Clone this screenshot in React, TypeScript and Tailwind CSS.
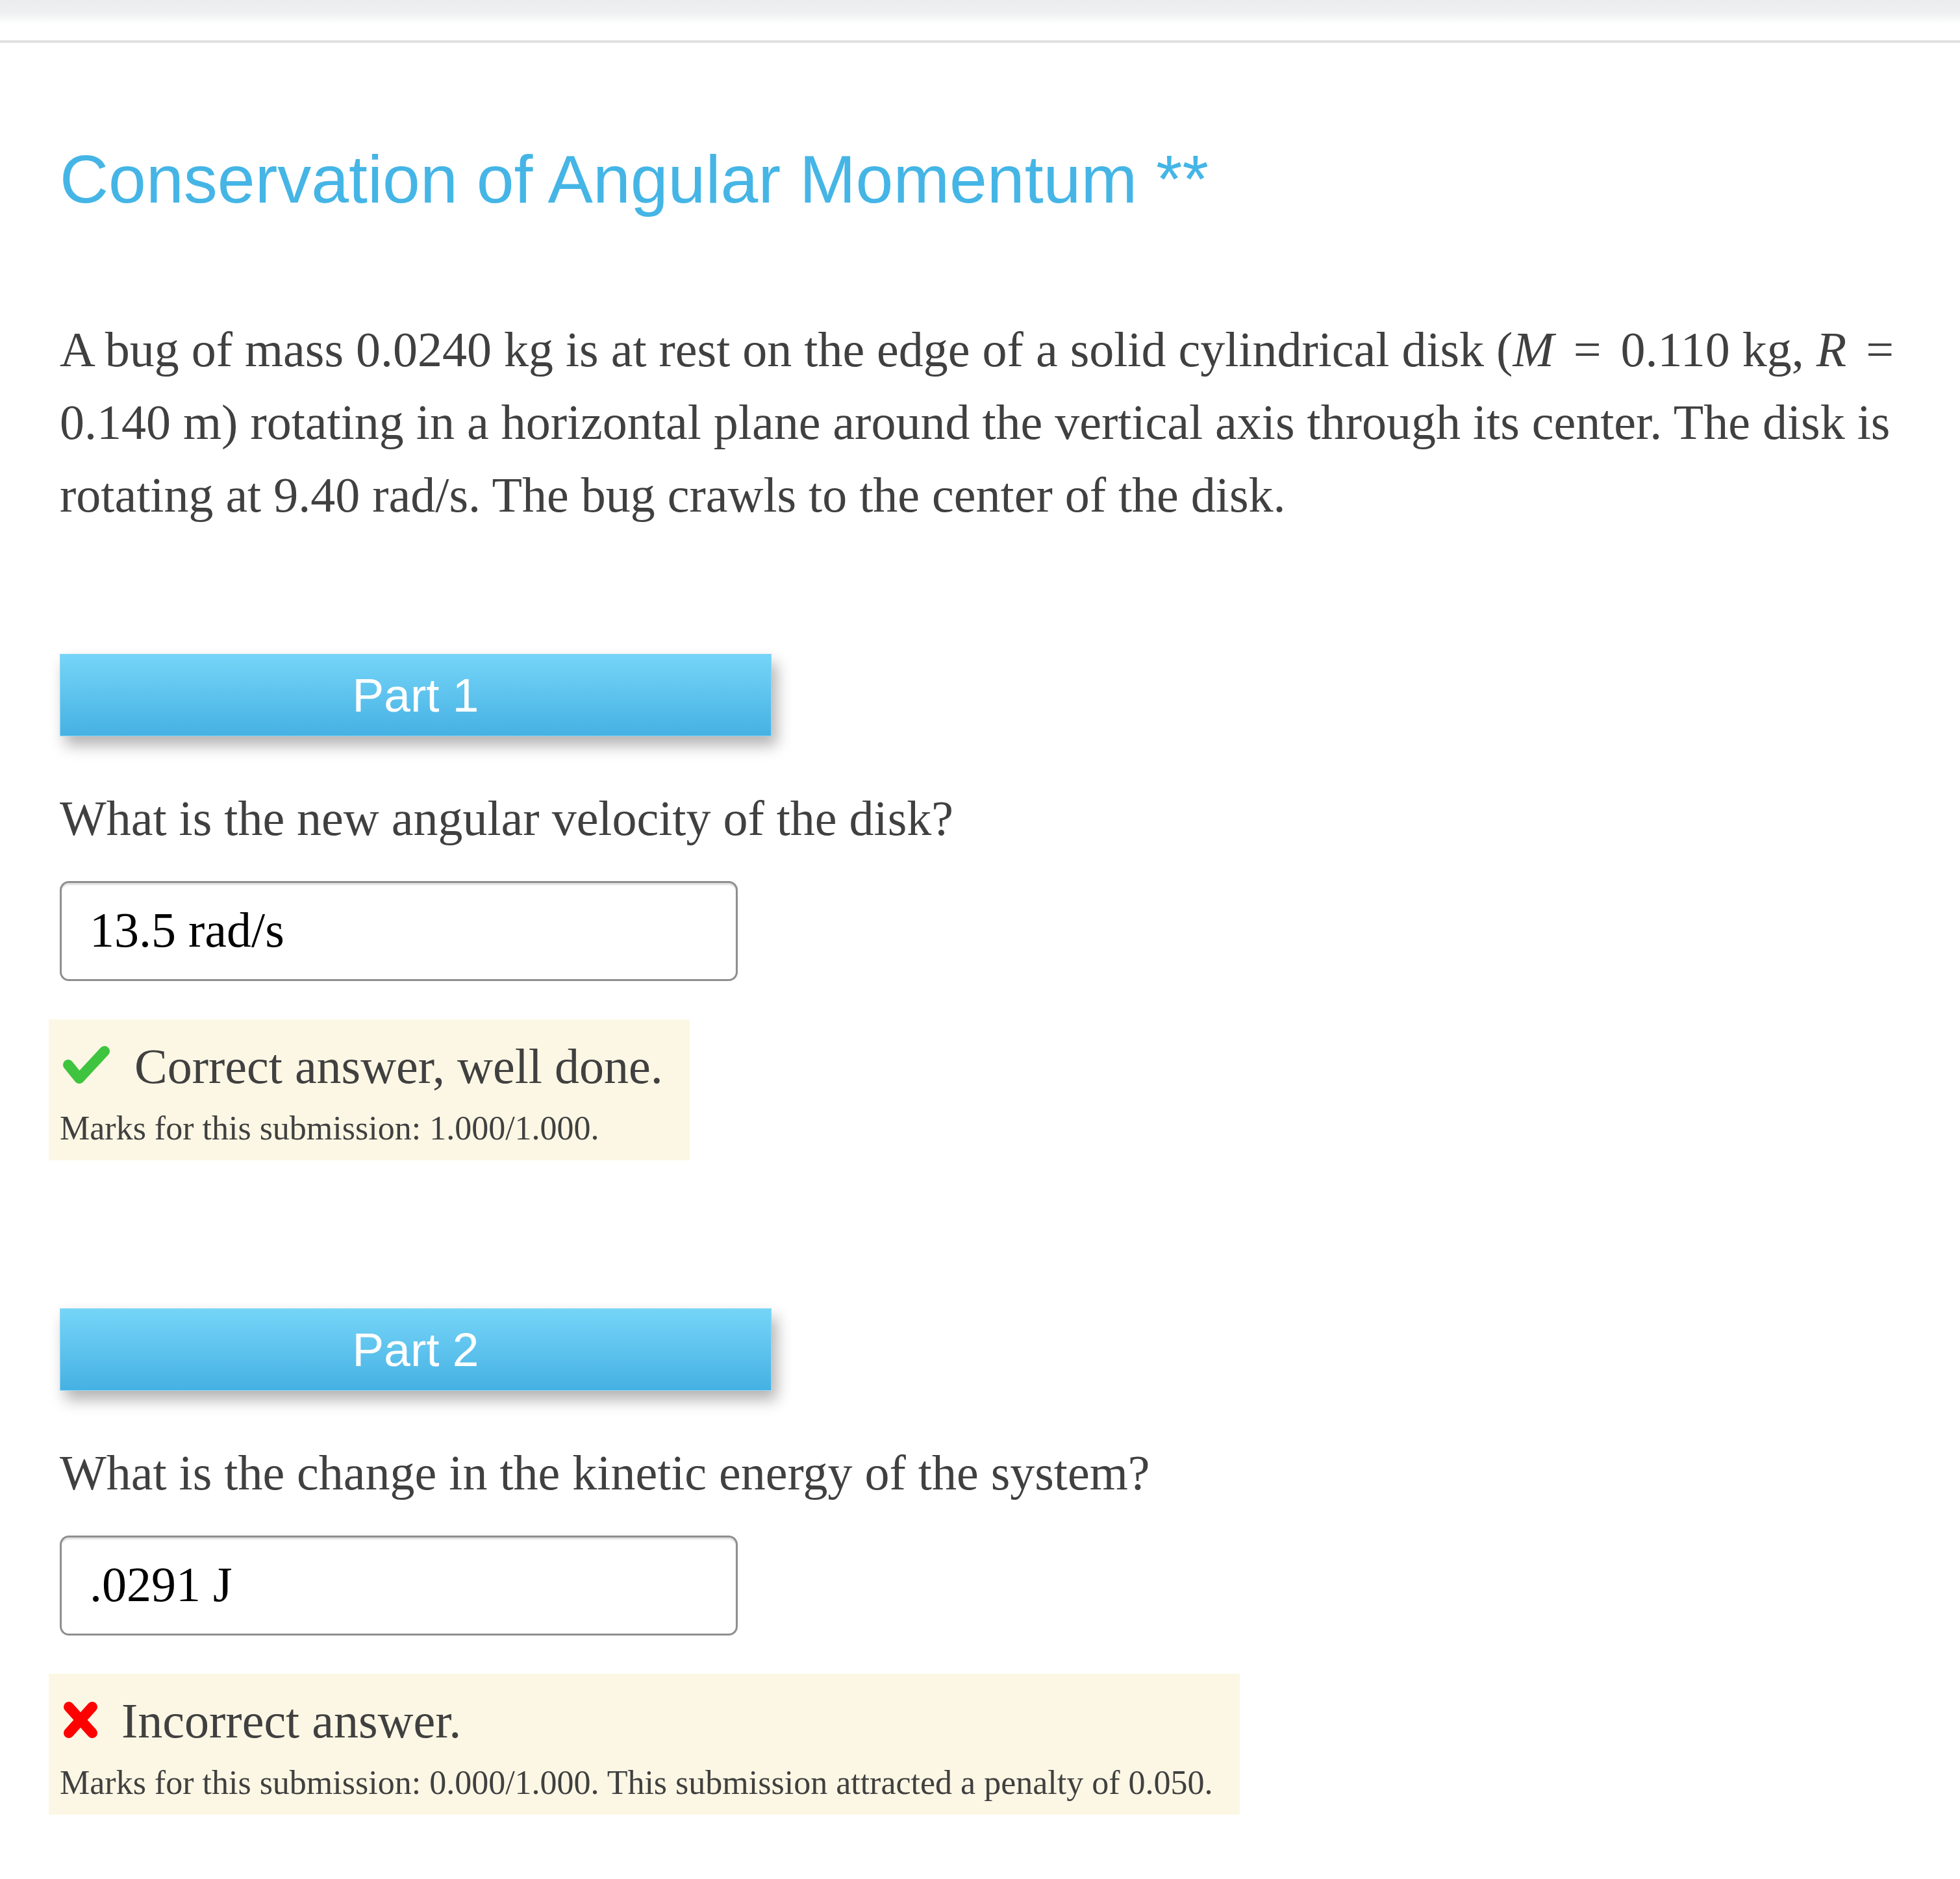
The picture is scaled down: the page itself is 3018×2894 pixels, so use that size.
import React from "react";

const serif = "font-['Liberation_Serif','Times_New_Roman',serif]";
const sans = "font-['Liberation_Sans',Arial,sans-serif]";

function CheckIcon() {
  return (
    <svg width="73" height="60" viewBox="0 0 73 60" className="shrink-0">
      <polyline
        points="9,30 26,51 65,9"
        fill="none"
        stroke="#3ec43f"
        strokeWidth="16"
        strokeLinecap="round"
        strokeLinejoin="round"
      />
    </svg>
  );
}

function CrossIcon() {
  return (
    <svg width="56" height="60" viewBox="0 0 56 60" className="shrink-0">
      <g stroke="#ff0000" strokeWidth="16" strokeLinecap="round">
        <line x1="10" y1="10" x2="46" y2="50" />
        <line x1="46" y1="10" x2="10" y2="50" />
      </g>
    </svg>
  );
}

function PartHeader({ label }: { label: string }) {
  return (
    <div className="w-[1096px] h-[127px] border border-[#8fd8f6] bg-gradient-to-b from-[#75d5f8] to-[#45b1e3] shadow-[8px_14px_22px_rgba(0,0,0,0.3)] flex items-center justify-center">
      <span className={`${sans} text-[73px] leading-[127px] text-white`}>{label}</span>
    </div>
  );
}

function AnswerBox({ value }: { value: string }) {
  return (
    <div className="w-[1044px] h-[154px] border-[3px] border-[#8f8f8f] rounded-[14px] bg-white shadow-[inset_0_3px_2px_rgba(0,0,0,0.12)] pl-[43px] pt-[16px]">
      <span className={`${serif} text-[76px] leading-[112px] text-black`}>{value}</span>
    </div>
  );
}

function Feedback({
  ok,
  title,
  marks,
}: {
  ok: boolean;
  title: string;
  marks: string;
}) {
  return (
    <div className="-ml-[17px] w-fit bg-[#fcf7e4] pl-[17px] pr-[41px] pt-[16px] pb-[14px]">
      <div className={`flex items-end pl-[4px] ${ok ? "gap-[38px]" : "gap-[35px]"} h-[112px]`}>
        <div className={ok ? "pb-[28px]" : "pb-[27px]"}>{ok ? <CheckIcon /> : <CrossIcon />}</div>
        <span className={`${serif} text-[76px] leading-[112px] text-[#404040] whitespace-nowrap`}>{title}</span>
      </div>
      <div className={`${serif} mt-[5px] text-[52px] leading-[70px] text-[#404040] whitespace-nowrap`}>{marks}</div>
    </div>
  );
}

export default function App() {
  return (
    <div className="min-h-screen w-full bg-white">
      <div className="h-[38px] bg-gradient-to-b from-[#ebecee] via-[#eef0f1] to-white" />
      <div className="h-[24px]" />
      <div className="h-[4px] bg-[#e1e1e1]" />

      <div className="pl-[92px]">
        <h1 className={`${sans} mt-[150px] text-[104px] leading-[120px] font-normal text-[#45b5e6] whitespace-nowrap`}>
          Conservation of Angular Momentum **
        </h1>

        <p className={`${serif} mt-[146px] text-[76px] leading-[112px] text-[#404040] whitespace-nowrap`}>
          A bug of mass 0.0240 kg is at rest on the edge of a solid cylindrical disk (<i>M</i>
          <span className="mx-[11px]"> = </span>0.110 kg, <i>R</i>
          <span className="ml-[11px]"> =</span>
          <br />
          0.140 m) rotating in a horizontal plane around the vertical axis through its center. The disk is
          <br />
          rotating at 9.40 rad/s. The bug crawls to the center of the disk.
        </p>

        <div className="mt-[189px]">
          <PartHeader label="Part 1" />
        </div>
        <p className={`${serif} mt-[70px] text-[76px] leading-[112px] text-[#404040] whitespace-nowrap`}>
          What is the new angular velocity of the disk?
        </p>
        <div className="mt-[41px]">
          <AnswerBox value="13.5 rad/s" />
        </div>
        <div className="mt-[59px]">
          <Feedback ok title="Correct answer, well done." marks="Marks for this submission: 1.000/1.000." />
        </div>

        <div className="mt-[228px]">
          <PartHeader label="Part 2" />
        </div>
        <p className={`${serif} mt-[70px] text-[76px] leading-[112px] text-[#404040] whitespace-nowrap`}>
          What is the change in the kinetic energy of the system?
        </p>
        <div className="mt-[41px]">
          <AnswerBox value=".0291 J" />
        </div>
        <div className="mt-[59px]">
          <Feedback
            ok={false}
            title="Incorrect answer."
            marks="Marks for this submission: 0.000/1.000. This submission attracted a penalty of 0.050."
          />
        </div>
      </div>
    </div>
  );
}
